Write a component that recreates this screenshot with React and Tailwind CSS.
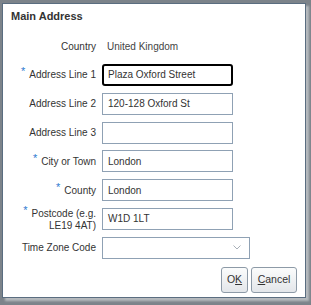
import React from "react";

const fields = [
  { label: "Address Line 1", value: "Plaza Oxford Street", required: true, focused: true },
  { label: "Address Line 2", value: "120-128 Oxford St" },
  { label: "Address Line 3", value: "" },
  { label: "City or Town", value: "London", required: true },
  { label: "County", value: "London", required: true },
  { label: ["Postcode (e.g.", "LE19 4AT)"], value: "W1D 1LT", required: true },
];

const Star = () => (
  <span className="text-[#2e7ad0] text-[11px] leading-none relative top-[-3px] mr-[4px]">*</span>
);

const Label = ({ label, required }) => {
  if (Array.isArray(label)) {
    return (
      <div className="text-right text-[10px] leading-[12px] text-[#333]">
        {required && <Star />}
        {label[0]}
        <br />
        {label[1]}
      </div>
    );
  }
  return (
    <div className="flex items-center justify-end text-[10px] text-[#333]">
      {required && <Star />}
      <span>{label}</span>
    </div>
  );
};

export default function App() {
  return (
    <div className="w-[311px] h-[305px] bg-[#7c838a] pt-[3px] pl-[2px] font-['Liberation_Sans',Arial,sans-serif]">
      <div className="w-[304px] h-[295px] bg-white border border-[#5a6d80] shadow-[3px_3px_2px_#b6babe] flex flex-col">
        {/* Title */}
        <h1 className="pl-[8px] pt-[6px] text-[11px] leading-[13px] font-bold text-[#333]">
          Main Address
        </h1>

        {/* Form */}
        <div className="grid grid-cols-[93px_auto] auto-rows-[22px] gap-x-[6px] gap-y-[6.8px] mt-[12.2px]">
          <div className="flex items-center justify-end text-[10px] text-[#333]">Country</div>
          <div className="flex items-center pl-[5px] text-[10px] text-[#444]">United Kingdom</div>

          {fields.map((f, i) => (
            <React.Fragment key={i}>
              <Label label={f.label} required={f.required} />
              <div
                className={`w-[131px] h-[22px] flex items-center text-[10px] text-[#333] ${
                  f.focused
                    ? "border-2 border-black rounded-[3px] pl-[4px]"
                    : "border border-[#8fa1b4] pl-[5px]"
                }`}
              >
                {f.value}
              </div>
            </React.Fragment>
          ))}

          <Label label="Time Zone Code" />
          <div className="w-[148px] h-[22px] border border-[#8fa1b4] flex items-center justify-end pr-[8px]">
            <svg width="8" height="5" viewBox="0 0 8 5" fill="none">
              <path d="M0.5 0.5L4 4L7.5 0.5" stroke="#a9b0b8" strokeWidth="1" />
            </svg>
          </div>
        </div>

        {/* Buttons */}
        <div className="flex justify-end gap-[3px] pr-[8px] mt-[8.2px]">
          <button className="w-[27px] h-[26px] border border-[#8d9aa7] rounded-[3px] bg-gradient-to-b from-[#fbfcfc] to-[#e3e6ea] text-[10.5px] text-[#333]">
            O<span className="underline">K</span>
          </button>
          <button className="w-[46px] h-[26px] border border-[#8d9aa7] rounded-[3px] bg-gradient-to-b from-[#fbfcfc] to-[#e3e6ea] text-[10.5px] text-[#333]">
            <span className="underline">C</span>ancel
          </button>
        </div>
      </div>
    </div>
  );
}
